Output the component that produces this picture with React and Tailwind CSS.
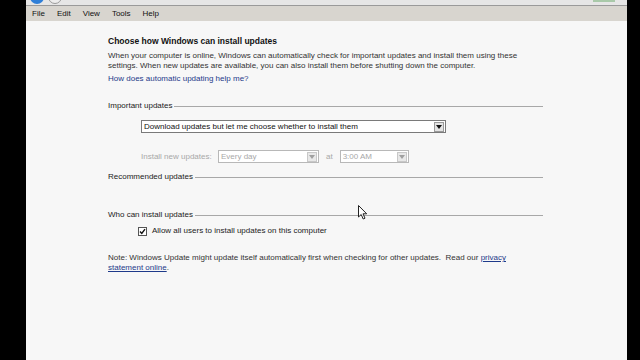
import { useState } from "react";

function Section({ title }) {
  return (
    <div className="flex items-center gap-[2px]">
      <span className="whitespace-nowrap text-[#222]">{title}</span>
      <div className="h-0 flex-1 border-t border-[#a8a8a8]" />
    </div>
  );
}

function Combo({ value, width, disabled }) {
  return (
    <div
      className={`flex h-[13px] items-center justify-between border ${
        disabled ? "border-[#b8b8b8] text-[#a8a8a8]" : "border-[#7a7a7a] text-[#111]"
      } bg-white`}
      style={{ width }}
    >
      <span className="truncate pl-[2px] leading-[11px]">{value}</span>
      <span
        className={`mr-[1px] flex h-[10px] w-[10px] items-center justify-center border ${
          disabled ? "border-[#c8c8c8] bg-[#e8e8e8]" : "border-[#9a9a9a] bg-[#e4e4e4]"
        }`}
      >
        <svg width="6" height="4" viewBox="0 0 6 4">
          <path d="M0 0h6L3 4z" fill={disabled ? "#a0a0a0" : "#111"} />
        </svg>
      </span>
    </div>
  );
}

export default function App() {
  const [allowAll, setAllowAll] = useState(true);

  return (
    <div
      className="relative flex h-[360px] w-[640px] overflow-hidden bg-black text-[8px]"
      style={{ fontFamily: '"Liberation Sans", Arial, sans-serif' }}
    >
      <div className="w-[26px]" />
      <div className="flex w-[601px] flex-col">
        <div className="relative h-[5px] bg-[#e6e6e6]">
          <div className="absolute left-[4px] top-[-10px] h-[14px] w-[14px] rounded-full bg-[#2f7fd8]" />
          <div className="absolute left-[22px] top-[-10px] h-[14px] w-[14px] rounded-full border border-[#9a9a9a] bg-[#ededed]" />
          <div className="absolute right-[12px] top-0 h-[2px] w-[22px] bg-[#a9c9a9]" />
        </div>
        <div className="flex h-[16px] items-center gap-[12px] border-t border-[#9a9a9a] bg-[#d8d5cf] pl-[6px] text-[#111]">
          <span>File</span>
          <span>Edit</span>
          <span>View</span>
          <span>Tools</span>
          <span>Help</span>
        </div>
        <div className="flex-1 bg-[#f7f7f7] pl-[82px] pt-[14px]">
          <div className="flex w-[435px] flex-col">
            <div className="text-[8.5px] font-bold leading-[12px] text-[#111]">
              Choose how Windows can install updates
            </div>
            <p className="mt-[4px] leading-[10px] text-[#333]">
              When your computer is online, Windows can automatically check for important updates and install them using these
              settings. When new updates are available, you can also install them before shutting down the computer.
            </p>
            <a className="mt-[3px] leading-[10px] text-[#1e3a8a]">How does automatic updating help me?</a>

            <div className="mt-[16px]">
              <Section title="Important updates" />
            </div>
            <div className="mt-[8px] pl-[33px]">
              <Combo value="Download updates but let me choose whether to install them" width={305} />
            </div>
            <div className="mt-[17px] flex items-center pl-[33px] text-[#a8a8a8]">
              <span className="w-[77px]">Install new updates:</span>
              <Combo value="Every day" width={101} disabled />
              <span className="mx-[7px]">at</span>
              <Combo value="3:00 AM" width={69} disabled />
            </div>

            <div className="mt-[8px]">
              <Section title="Recommended updates" />
            </div>

            <div className="mt-[26px]">
              <Section title="Who can install updates" />
            </div>
            <label className="mt-[4px] flex items-center gap-[5px] pl-[30px] text-[#222]">
              <span
                onClick={() => setAllowAll(!allowAll)}
                className="flex h-[9px] w-[9px] items-center justify-center border border-[#555] bg-white"
              >
                {allowAll && (
                  <svg width="7" height="7" viewBox="0 0 7 7">
                    <path d="M1 3.5L2.8 5.5L6 1.2" stroke="#111" strokeWidth="1.4" fill="none" />
                  </svg>
                )}
              </span>
              Allow all users to install updates on this computer
            </label>

            <p className="mt-[16px] leading-[10px] text-[#333]">
              Note: Windows Update might update itself automatically first when checking for other updates.&nbsp; Read our{" "}
              <a className="text-[#1e3a8a] underline">privacy statement online</a>.
            </p>
          </div>
        </div>
      </div>
      <svg className="absolute left-[358px] top-[205px]" width="10" height="15" viewBox="0 0 10 15">
        <path d="M0.5 0.5V12L3.2 9.5L5.2 14L7 13.2L5 8.8H8.7Z" fill="white" stroke="#222" strokeWidth="1" />
      </svg>
    </div>
  );
}
